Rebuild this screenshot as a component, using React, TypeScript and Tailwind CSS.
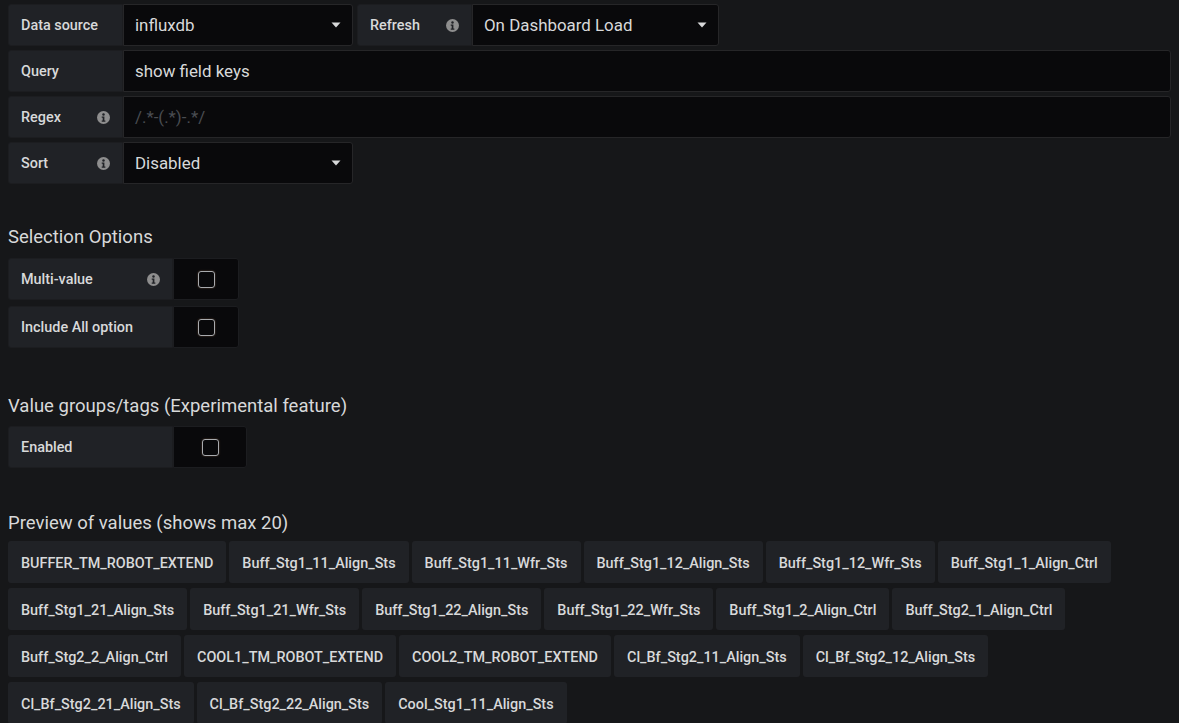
import React from 'react';

const font = { fontFamily: 'Roboto, "Noto Sans", sans-serif' };

const InfoIcon = () => (
  <svg width="13" height="13" viewBox="0 0 16 16" className="shrink-0 -mt-[2px]">
    <circle cx="8" cy="8" r="8" fill="#8e8e8e" />
    <circle cx="8" cy="4.4" r="1.5" fill="#202226" />
    <path d="M5.8 6.9h3.3v4.8h1.2v1.5H5.8v-1.5h1.2V8.4H5.8z" fill="#202226" />
  </svg>
);

const Caret = () => (
  <svg width="10" height="6" viewBox="0 0 10 6" className="shrink-0 -mt-[2px]">
    <path d="M0.5 0.5h9L5 5.5z" fill="#d8d9da" />
  </svg>
);

const Label: React.FC<{ text: string; width: string; info?: boolean }> = ({ text, width, info }) => (
  <div
    className={`${width} h-[42px] shrink-0 flex items-center justify-between pl-[12px] pr-[12px] pt-[2px] bg-[#202226] border border-[#1c1d20] rounded-l-[3px] text-[14.4px] font-medium text-[#d8d9da]`}
  >
    <span>{text}</span>
    {info && <InfoIcon />}
  </div>
);

const Select: React.FC<{ value: string; width: string }> = ({ value, width }) => (
  <div
    className={`${width} h-[42px] flex items-center justify-between pl-[11px] pr-[11px] pt-[2px] bg-[#09090b] border border-[#262628] rounded-r-[3px] text-[16.9px] text-[#d8d9da]`}
  >
    <span>{value}</span>
    <Caret />
  </div>
);

const Checkbox: React.FC<{ width: string }> = ({ width }) => (
  <div className={`${width} h-[42px] flex items-center justify-center bg-[#09090b] border border-[#1c1d20] rounded-r-[3px]`}>
    <div className="w-[17px] h-[17px] rounded-[3px] border-[1.5px] border-[#a9abae] shadow-[0_0_2px_rgba(255,180,120,0.35)]" />
  </div>
);

const Heading: React.FC<{ text: string; className: string }> = ({ text, className }) => (
  <div className={`text-[18.5px] leading-[20px] text-[#d8d9da] ${className}`}>{text}</div>
);

const values = [
  'BUFFER_TM_ROBOT_EXTEND',
  'Buff_Stg1_11_Align_Sts',
  'Buff_Stg1_11_Wfr_Sts',
  'Buff_Stg1_12_Align_Sts',
  'Buff_Stg1_12_Wfr_Sts',
  'Buff_Stg1_1_Align_Ctrl',
  'Buff_Stg1_21_Align_Sts',
  'Buff_Stg1_21_Wfr_Sts',
  'Buff_Stg1_22_Align_Sts',
  'Buff_Stg1_22_Wfr_Sts',
  'Buff_Stg1_2_Align_Ctrl',
  'Buff_Stg2_1_Align_Ctrl',
  'Buff_Stg2_2_Align_Ctrl',
  'COOL1_TM_ROBOT_EXTEND',
  'COOL2_TM_ROBOT_EXTEND',
  'Cl_Bf_Stg2_11_Align_Sts',
  'Cl_Bf_Stg2_12_Align_Sts',
  'Cl_Bf_Stg2_21_Align_Sts',
  'Cl_Bf_Stg2_22_Align_Sts',
  'Cool_Stg1_11_Align_Sts',
];

export default function App() {
  return (
    <div className="min-h-[723px] w-full bg-[#161719] px-[8px] pt-[4px] overflow-hidden" style={font}>
      {/* Query options */}
      <div className="flex flex-col gap-[4px]">
        <div className="flex gap-[4px]">
          <div className="flex">
            <Label text="Data source" width="w-[115px]" />
            <Select value="influxdb" width="w-[230px]" />
          </div>
          <div className="flex">
            <Label text="Refresh" width="w-[115px]" info />
            <Select value="On Dashboard Load" width="w-[247px]" />
          </div>
        </div>
        <div className="flex">
          <Label text="Query" width="w-[115px]" />
          <div className="flex-1 h-[42px] flex items-center pl-[11px] pt-[2px] bg-[#09090b] border border-[#262628] rounded-r-[3px] text-[16.9px] text-[#d8d9da]">
            show field keys
          </div>
        </div>
        <div className="flex">
          <Label text="Regex" width="w-[115px]" info />
          <div className="flex-1 h-[42px] flex items-center pl-[11px] pt-[2px] bg-[#09090b] border border-[#262628] rounded-r-[3px] text-[16.9px] text-[#4a4d52]">
            /.*-(.*)-.*/
          </div>
        </div>
        <div className="flex">
          <Label text="Sort" width="w-[115px]" info />
          <Select value="Disabled" width="w-[230px]" />
        </div>
      </div>

      {/* Selection options */}
      <Heading text="Selection Options" className="mt-[43px] mb-[11px]" />
      <div className="flex flex-col gap-[6px]">
        <div className="flex">
          <Label text="Multi-value" width="w-[165px]" info />
          <Checkbox width="w-[66px]" />
        </div>
        <div className="flex">
          <Label text="Include All option" width="w-[165px]" />
          <Checkbox width="w-[66px]" />
        </div>
      </div>

      {/* Value groups */}
      <Heading text="Value groups/tags (Experimental feature)" className="mt-[48px] mb-[10px]" />
      <div className="flex">
        <Label text="Enabled" width="w-[165px]" />
        <Checkbox width="w-[74px]" />
      </div>

      {/* Preview */}
      <Heading text="Preview of values (shows max 20)" className="mt-[45px] mb-[8px]" />
      <div className="flex flex-wrap gap-x-[3px] gap-y-[5px]">
        {values.map((v) => (
          <div
            key={v}
            className="h-[42px] flex items-center px-[13px] pt-[3px] bg-[#202226] rounded-[3px] text-[14.4px] font-medium text-[#d8d9da]"
          >
            {v}
          </div>
        ))}
      </div>
    </div>
  );
}
